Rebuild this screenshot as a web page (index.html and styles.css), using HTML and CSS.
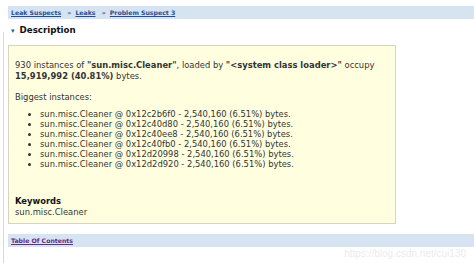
FILE: index.html
```html
<!DOCTYPE html>
<html lang="en">
<head>
<meta charset="UTF-8" />
<title>Problem Suspect 3</title>
<link rel="stylesheet" href="styles.css">
</head>
<body>

<div class="page">
  <div class="crumbs">
    <a href="#">Leak Suspects</a>
    <span class="sep">&raquo;</span>
    <a href="#">Leaks</a>
    <span class="sep">&raquo;</span>
    <a href="#">Problem Suspect 3</a>
  </div>

  <div class="section">
    <h2><span class="arrow">&#9662;</span> Description</h2>

    <div class="box">
      <p>930 instances of <b>"sun.misc.Cleaner"</b>, loaded by <b>"&lt;system class loader&gt;"</b> occupy <b>15,919,992 (40.81%)</b> bytes.</p>
      <p class="lead">Biggest instances:</p>
      <ul>
        <li>sun.misc.Cleaner @ 0x12c2b6f0 - 2,540,160 (6.51%) bytes.</li>
        <li>sun.misc.Cleaner @ 0x12c40d80 - 2,540,160 (6.51%) bytes.</li>
        <li>sun.misc.Cleaner @ 0x12c40ee8 - 2,540,160 (6.51%) bytes.</li>
        <li>sun.misc.Cleaner @ 0x12c40fb0 - 2,540,160 (6.51%) bytes.</li>
        <li>sun.misc.Cleaner @ 0x12d20998 - 2,540,160 (6.51%) bytes.</li>
        <li>sun.misc.Cleaner @ 0x12d2d920 - 2,540,160 (6.51%) bytes.</li>
      </ul>
      <div class="keywords">
        <b>Keywords</b>
        <div>sun.misc.Cleaner</div>
      </div>
    </div>
  </div>

  <div class="crumbs toc">
    <a href="#">Table Of Contents</a>
  </div>

  <div class="mark">https://blog.csdn.net/cui130</div>
</div>

</body>
</html>
```

FILE: styles.css
```css
* {
  box-sizing: border-box;
}
body {
  margin: 0;
  font-family: "DejaVu Sans", Verdana, sans-serif;
  background: #fff;
  color: #222;
  font-size: 8.4px;
}
.page {
  padding: 6px 0 0 8px;
  height: 263px;
  position: relative;
}
.page::before {
  content: "";
  position: absolute;
  left: 3px; top: 32px; bottom: 0;
  border-left: 1px solid #d8d8d8;
}
.crumbs {
  background: #d6e3f0;
  height: 13px;
  padding: 2px 3px;
  font-size: 6.2px;
  font-weight: bold;
  line-height: 9px;
}
.crumbs a {
  color: #1f4f9c;
}
.crumbs .sep {
  color: #4a6fa8;
  margin: 0 2px 0 4px;
}
.section h2 {
  margin: 0;
  padding: 5px 0 0 3px;
  font-size: 8.7px;
  line-height: 13px;
  color: #111;
}
.section .arrow {
  color: #2a5aa8;
  font-size: 7px;
  margin-right: 2px;
}
.box {
  margin-top: 7px;
  width: 388px;
  height: 179px;
  background: #ffffe0;
  border: 1px solid #d4d4c0;
  padding: 14px 6px 0;
  line-height: 11px;
  color: #333;
}
.box p {
  margin: 0 0 10px;
}
.box p.lead {
  margin-bottom: 6px;
}
.box ul {
  margin: 0;
  padding-left: 25px;
  line-height: 10px;
}
.keywords {
  margin-top: 27px;
  line-height: 11px;
}
.keywords b {
  color: #111;
}
.toc {
  margin-top: 10px;
}
.toc a {
  color: #6a2a8a;
}
.mark {
  position: absolute;
  right: 8px;
  bottom: 4px;
  font-family: "Liberation Sans", Arial, sans-serif;
  font-size: 10px;
  color: #ececec;
}
```
